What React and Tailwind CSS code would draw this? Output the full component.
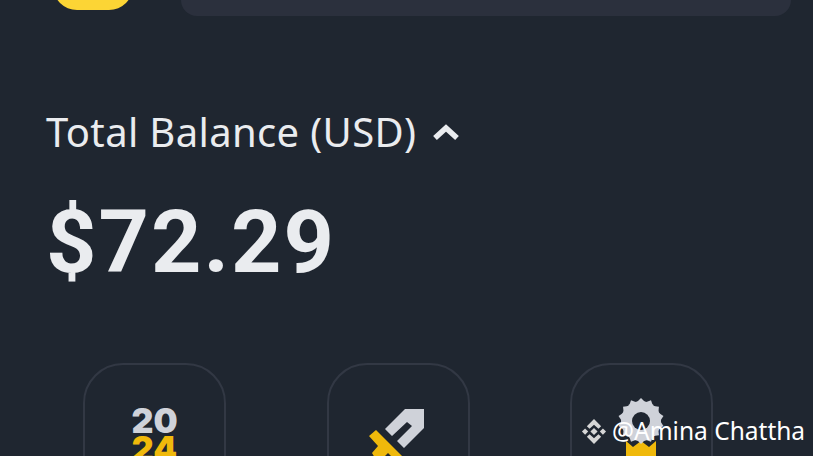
import React from 'react';

const Watermark = () => (
  <div className="absolute left-[580px] top-[415px] flex items-center gap-[4px] text-white">
    <svg width="28" height="25" viewBox="0 0 28 28" fill="#d6d6d6">
      <path d="M14 0 L22 8 L19 11 L14 6.5 L9 11 L6 8 Z" />
      <path d="M14 28 L6 20 L9 17 L14 21.5 L19 17 L22 20 Z" />
      <path d="M4 10.5 L7.5 14 L4 17.5 L0.5 14 Z" />
      <path d="M24 10.5 L27.5 14 L24 17.5 L20.5 14 Z" />
      <path d="M14 10 L18 14 L14 18 L10 14 Z" />
    </svg>
    <span className="font-['Noto_Sans',sans-serif] text-[24.5px] leading-[32px] whitespace-nowrap">@Amina Chattha</span>
  </div>
);

const SwordIcon = () => (
  <svg width="64" height="64" viewBox="0 0 64 64" className="mt-[40px]">
    <path d="M39 4 H58 V23 L38 43 L31 36 L46 21 L41 17 L26 31 L19 24 Z" fill="#cfd2d9" />
    <path d="M3 31 L10 25 L45 60 L38 67 L30 59 L18 68 L6 48 L12 41 Z" fill="#f0b90b" />
    <path d="M22 48 L26 52 L20 58 L16 54 Z" fill="#1f2630" />
  </svg>
);

const GearIcon = () => {
  const teeth = [];
  for (let i = 0; i < 14; i++) {
    const deg = (i * 360) / 14;
    teeth.push(
      <path key={i} d="M30 5 L34 1 L38 5 L38 10 H30 Z" fill="#cfd2d9" transform={`rotate(${deg} 34 24)`} />
    );
  }
  return (
    <svg width="68" height="64" viewBox="0 0 68 64" className="mt-[32px] -ml-[2px]">
      <path d="M19 44 L26 50 L34 44 L42 50 L49 44 V64 H19 Z" fill="#f0b90b" />
      <circle cx="34" cy="24" r="20" fill="#cfd2d9" />
      {teeth}
      <circle cx="34" cy="24" r="9" fill="#1f2630" />
    </svg>
  );
};

const Card = ({ children }) => (
  <div className="w-[143px] h-[143px] shrink-0 rounded-[40px] border-2 border-[#323844] flex flex-col items-center">
    {children}
  </div>
);

export default function App() {
  return (
    <div className="relative w-[813px] h-[456px] overflow-hidden bg-[#1f2630]">
      {/* top row, cut off by the window */}
      <div className="flex items-end h-[16px]">
        <div className="ml-[53px] mb-[6px] w-[80px] h-[40px] shrink-0 rounded-b-[24px] bg-[#fcd535]" />
        <div className="ml-[48px] w-[610px] h-[16px] rounded-b-[18px] bg-[#2b303d]" />
      </div>

      <div className="mt-[89px] pl-[46px] flex items-center gap-[16px] h-[54px]">
        <span className="font-['Noto_Sans',sans-serif] font-normal text-[40px] tracking-[0.35px] leading-[54px] text-[#eaecef] whitespace-nowrap">Total Balance (USD)</span>
        <svg width="28" height="20" viewBox="0 0 28 20" fill="none" stroke="#eaecef" strokeWidth="5.5">
          <path d="M3 16 L14 6 L25 16" />
        </svg>
      </div>

      <div className="mt-[31px] pl-[46px] font-['Roboto',sans-serif] font-bold text-[88px] tracking-[2px] leading-[103px] text-[#eaecef] whitespace-nowrap">$72.29</div>

      <div className="mt-[70px] ml-[83px] flex gap-[100.5px]">
        <Card>
          <div className="mt-[42px] font-['Inter',sans-serif] font-black text-[34px] leading-[28px] text-center">
            <div className="text-[#cfd2d9]">20</div>
            <div className="text-[#f0b90b]">24</div>
          </div>
        </Card>
        <Card>
          <SwordIcon />
        </Card>
        <Card>
          <GearIcon />
        </Card>
      </div>

      <Watermark />
    </div>
  );
}
